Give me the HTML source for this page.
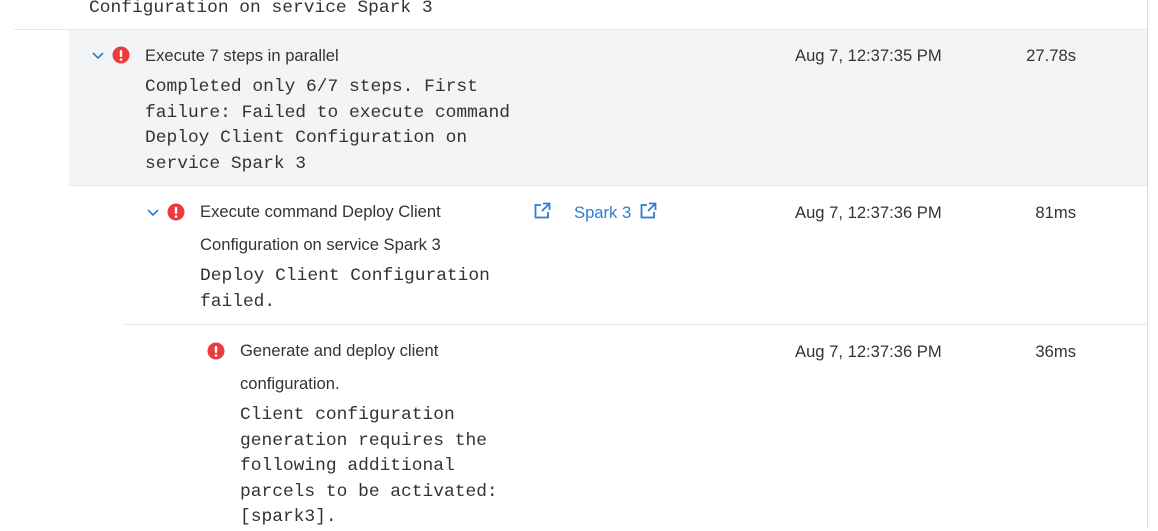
<!DOCTYPE html>
<html><head><meta charset="utf-8"><style>
body{margin:0;width:1158px;height:529px;overflow:hidden;background:#fff;position:relative;font-family:"Liberation Sans",sans-serif;color:#333}
.a{position:absolute;white-space:nowrap}
.m{font-family:"Liberation Mono",monospace;font-size:17.9px;line-height:25.5px;color:#333}
.s{font-size:16.6px;color:#333}
.l{font-size:16.6px;color:#2b7bd9}
.r{position:absolute;right:82px;font-size:16.6px;color:#333;white-space:nowrap}
svg{position:absolute}
</style></head><body>
<div class="a m" style="left:89px;top:-4px">Configuration on service Spark 3</div>
<div class="a" style="left:14px;top:29px;width:1134px;height:1px;background:#e6e7ea"></div>
<div class="a" style="left:69px;top:30px;width:1078px;height:155px;background:#f3f4f6"></div>
<div class="a" style="left:69px;top:185px;width:1079px;height:1px;background:#e6e7ea"></div>
<div class="a" style="left:124px;top:324px;width:1024px;height:1px;background:#e6e7ea"></div>
<div class="a" style="left:1147px;top:0;width:1px;height:529px;background:#dcdde0"></div>

<svg style="left:91px;top:50px" width="14" height="12"><path d="M2 3l5 5 5-5" fill="none" stroke="#2b7bd9" stroke-width="1.6"/></svg>
<svg style="left:112px;top:46px" width="18" height="18"><circle cx="9" cy="9" r="8.5" fill="#ec3b3f"/><rect x="7.8" y="4" width="2.4" height="7" rx="1" fill="#fff"/><circle cx="9" cy="13.5" r="1.3" fill="#fff"/></svg>
<div class="a s" style="left:145px;top:46px">Execute 7 steps in parallel</div>
<div class="a m" style="left:145px;top:75px">Completed only 6/7 steps. First<br>failure: Failed to execute command<br>Deploy Client Configuration on<br>service Spark 3</div>
<div class="a s" style="left:795px;top:46px">Aug 7, 12:37:35 PM</div>
<div class="r" style="top:46px">27.78s</div>

<svg style="left:146px;top:207px" width="14" height="12"><path d="M2 3l5 5 5-5" fill="none" stroke="#2b7bd9" stroke-width="1.6"/></svg>
<svg style="left:167px;top:203px" width="18" height="18"><circle cx="9" cy="9" r="8.5" fill="#ec3b3f"/><rect x="7.8" y="4" width="2.4" height="7" rx="1" fill="#fff"/><circle cx="9" cy="13.5" r="1.3" fill="#fff"/></svg>
<div class="a s" style="left:200px;top:195px;line-height:33px">Execute command Deploy Client<br>Configuration on service Spark 3</div>
<div class="a m" style="left:200px;top:264px">Deploy Client Configuration<br>failed.</div>
<svg style="left:533px;top:202px" width="18" height="18"><path d="M8 3H2.5v12.5H15V10" fill="none" stroke="#2b7bd9" stroke-width="1.8"/><path d="M10 1.5h6.5V8M16.5 1.5L9 9" fill="none" stroke="#2b7bd9" stroke-width="1.8"/></svg>
<div class="a l" style="left:574px;top:203px">Spark 3</div>
<svg style="left:639px;top:202px" width="18" height="18"><path d="M8 3H2.5v12.5H15V10" fill="none" stroke="#2b7bd9" stroke-width="1.8"/><path d="M10 1.5h6.5V8M16.5 1.5L9 9" fill="none" stroke="#2b7bd9" stroke-width="1.8"/></svg>
<div class="a s" style="left:795px;top:203px">Aug 7, 12:37:36 PM</div>
<div class="r" style="top:203px">81ms</div>

<svg style="left:207px;top:342px" width="18" height="18"><circle cx="9" cy="9" r="8.5" fill="#ec3b3f"/><rect x="7.8" y="4" width="2.4" height="7" rx="1" fill="#fff"/><circle cx="9" cy="13.5" r="1.3" fill="#fff"/></svg>
<div class="a s" style="left:240px;top:334px;line-height:33px">Generate and deploy client<br>configuration.</div>
<div class="a m" style="left:240px;top:403px">Client configuration<br>generation requires the<br>following additional<br>parcels to be activated:<br>[spark3].</div>
<div class="a s" style="left:795px;top:342px">Aug 7, 12:37:36 PM</div>
<div class="r" style="top:342px">36ms</div>
</body></html>
